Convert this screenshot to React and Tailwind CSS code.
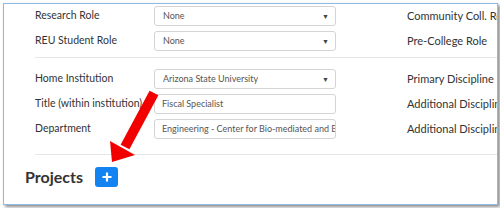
const Select = ({ value }) => (
  <div className="shrink-0 h-[20px] w-[182px] border border-[#d4d4d4] rounded-[3px] bg-white flex items-center justify-between pl-[8px] pr-[6px] text-[9px] text-[#555]">
    <span className="truncate">{value}</span>
    <span className="text-[7px] text-[#444]">▼</span>
  </div>
);

const Input = ({ value }) => (
  <div className="shrink-0 h-[20px] w-[182px] border border-[#d4d4d4] rounded-[3px] bg-white flex items-center px-[7px] text-[9px] text-[#555] overflow-hidden whitespace-nowrap">
    {value}
  </div>
);

const Row = ({ label, right, children }) => (
  <div className="flex items-center h-[20px]">
    <div className="shrink-0 w-[119px] text-[10.5px] text-[#333] whitespace-nowrap overflow-hidden">{label}</div>
    {children}
    <div className="shrink-0 ml-[71px] text-[11px] text-[#333] whitespace-nowrap">{right}</div>
  </div>
);

export default function App() {
  return (
    <div className="w-[500px] h-[208px] bg-white relative overflow-hidden" style={{ fontFamily: 'Lato, "Open Sans", sans-serif' }}>
      <div className="absolute left-[3px] top-[3px] w-[495px] h-[202px] border border-[#8dbbe4] bg-white shadow-[2px_2px_3px_rgba(0,0,0,0.45)] overflow-hidden">
        <div className="pl-[31px] pt-[2px]">
          <div className="flex flex-col gap-[5px]">
            <Row label="Research Role" right="Community Coll. Role">
              <Select value="None" />
            </Row>
            <Row label="REU Student Role" right="Pre-College Role">
              <Select value="None" />
            </Row>
          </div>
          <div className="h-px bg-[#e6e6e6] mt-[6px]" />
          <div className="flex flex-col gap-[5px] mt-[11px]">
            <Row label="Home Institution" right="Primary Discipline">
              <Select value="Arizona State University" />
            </Row>
            <Row label="Title (within institution)" right="Additional Discipline">
              <Input value="Fiscal Specialist" />
            </Row>
            <Row label="Department" right="Additional Discipline">
              <Input value="Engineering - Center for Bio-mediated and Bio-inspired" />
            </Row>
          </div>
          <div className="h-px bg-[#e6e6e6] mt-[15px]" />
        </div>
        <div className="flex items-center pl-[21px] mt-[10px]">
          <span className="text-[16px] font-bold text-[#333]">Projects</span>
          <button className="ml-[12px] w-[23px] h-[20px] bg-[#1283f0] rounded-[3px] flex items-center justify-center">
            <svg width="12" height="12" viewBox="0 0 12 12">
              <path d="M6 1.5v9M1.5 6h9" stroke="white" strokeWidth="2.2" />
            </svg>
          </button>
        </div>
      </div>
      <svg className="absolute left-0 top-0" width="500" height="208" viewBox="0 0 500 208">
        <line x1="154" y1="93" x2="125" y2="147" stroke="#f20000" strokeWidth="10" />
        <polygon points="112,162 110,141 135,155" fill="#f20000" />
      </svg>
    </div>
  );
}
